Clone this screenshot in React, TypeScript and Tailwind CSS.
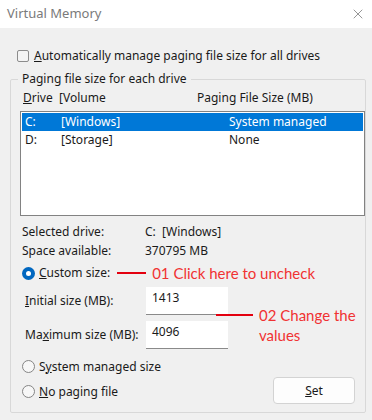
import { X } from 'lucide-react'

const ui = { fontFamily: '"Noto Sans", "Segoe UI", sans-serif' }
const note = { fontFamily: 'Lato, "Open Sans", sans-serif' }

function Radio({ checked }: { checked?: boolean }) {
  return checked ? (
    <span className="w-[13px] h-[13px] rounded-full bg-[#0067c0] flex items-center justify-center shrink-0">
      <span className="w-[5px] h-[5px] rounded-full bg-white" />
    </span>
  ) : (
    <span className="w-[13px] h-[13px] rounded-full border border-[#858585] bg-[#f7f7f7] shrink-0" />
  )
}

function SizeInput({ value }: { value: string }) {
  return (
    <div className="w-[82px] h-[28px] bg-white border-b border-[#8a8a8a] pl-[6px] pt-[2px] text-[12px] text-[#1a1a1a]">
      {value}
    </div>
  )
}

export default function App() {
  return (
    <div className="w-[372px] h-[420px] bg-[#f0f0f0] overflow-hidden text-[12px] text-[#1a1a1a]" style={ui}>
      {/* title bar */}
      <div className="h-[28px] bg-white flex items-center justify-between pl-[7px] pr-[6px]">
        <span className="text-[13px] text-[#7a7a7a]">Virtual Memory</span>
        <X className="w-[16px] h-[16px] text-[#6f6f6f]" strokeWidth={1.1} />
      </div>

      <div className="mt-[22px] pl-[17px] flex items-center gap-[5px] h-[12px]">
        <span className="w-[12px] h-[12px] border border-[#8c8c8c] rounded-[2px] bg-[#f4f4f4]" />
        <span>
          <u>A</u>utomatically manage paging file size for all drives
        </span>
      </div>

      <fieldset className="mt-[9px] ml-[10px] w-[356px] min-w-0 h-[342px] border border-[#d8d8d8] rounded-[2px] px-[10px]">
        <legend className="ml-[-3px] px-[4px] text-[12px] leading-[16px]">Paging file size for each drive</legend>

        <div className="flex h-[18px] items-center mt-[2px] pl-[2px]">
          <span className="w-[36px]">
            <u>D</u>rive
          </span>
          <span className="w-[138px]">[Volume</span>
          <span>Paging File Size (MB)</span>
        </div>

        <div className="mt-[4px] ml-[-1px] h-[105px] w-[345px] bg-white border border-[#828282] p-[1px]">
          <div className="flex h-[18px] items-center bg-[#0078d7] text-white pl-[3px]">
            <span className="w-[36px]">C:</span>
            <span className="w-[168px]">[Windows]</span>
            <span>System managed</span>
          </div>
          <div className="flex h-[17px] items-center pl-[3px]">
            <span className="w-[36px]">D:</span>
            <span className="w-[168px]">[Storage]</span>
            <span>None</span>
          </div>
        </div>

        <div className="mt-[6px] pl-[1px] flex flex-col">
          <div className="flex h-[19px] items-center">
            <span className="w-[123px]">Selected drive:</span>
            <span>C:&nbsp; [Windows]</span>
          </div>
          <div className="flex h-[19px] items-center">
            <span className="w-[123px]">Space available:</span>
            <span>370795 MB</span>
          </div>
        </div>

        <div className="mt-[3px] flex items-center h-[20px] pl-[1px]">
          <Radio checked />
          <span className="ml-[4px]">
            <u>C</u>ustom size:
          </span>
          <span className="ml-[7px] w-[29px] h-[2px] bg-[#e3000f]" />
          <span className="ml-[6px] text-[15px] text-[#f03232] whitespace-nowrap" style={note}>
            01 Click here to uncheck
          </span>
        </div>

        <div className="mt-[4px] flex">
          <div className="flex flex-col pl-[4px] w-[125px] shrink-0">
            <div className="h-[28px] flex items-center">
              <span>
                <u>I</u>nitial size (MB):
              </span>
            </div>
            <div className="h-[28px] mt-[6px] flex items-center">
              <span>
                Ma<u>x</u>imum size (MB):
              </span>
            </div>
          </div>
          <div className="flex flex-col gap-[6px] shrink-0">
            <SizeInput value="1413" />
            <SizeInput value="4096" />
          </div>
          <div className="flex flex-col ml-[-12px] pt-[18px] shrink-0">
            <div className="flex items-center h-[20px]">
              <span className="w-[37px] h-[2px] bg-[#e3000f] shrink-0" />
              <span className="ml-[6px] text-[15px] text-[#f03232] leading-[20px] whitespace-nowrap" style={note}>
                02 Change the
              </span>
            </div>
            <span className="ml-[43px] text-[15px] text-[#f03232] leading-[20px]" style={note}>
              values
            </span>
          </div>
        </div>

        <div className="flex items-end justify-between mt-[5px]">
          <div className="flex flex-col pl-[1px]">
            <div className="flex items-center h-[25px]">
              <Radio />
              <span className="ml-[4px]">
                S<u>y</u>stem managed size
              </span>
            </div>
            <div className="flex items-center h-[25px]">
              <Radio />
              <span className="ml-[4px]">
                <u>N</u>o paging file
              </span>
            </div>
          </div>
          <button className="w-[82px] h-[27px] bg-[#fdfdfd] border border-[#d3d3d3] rounded-[4px] text-[12px]">
            <u>S</u>et
          </button>
        </div>
      </fieldset>
    </div>
  )
}
